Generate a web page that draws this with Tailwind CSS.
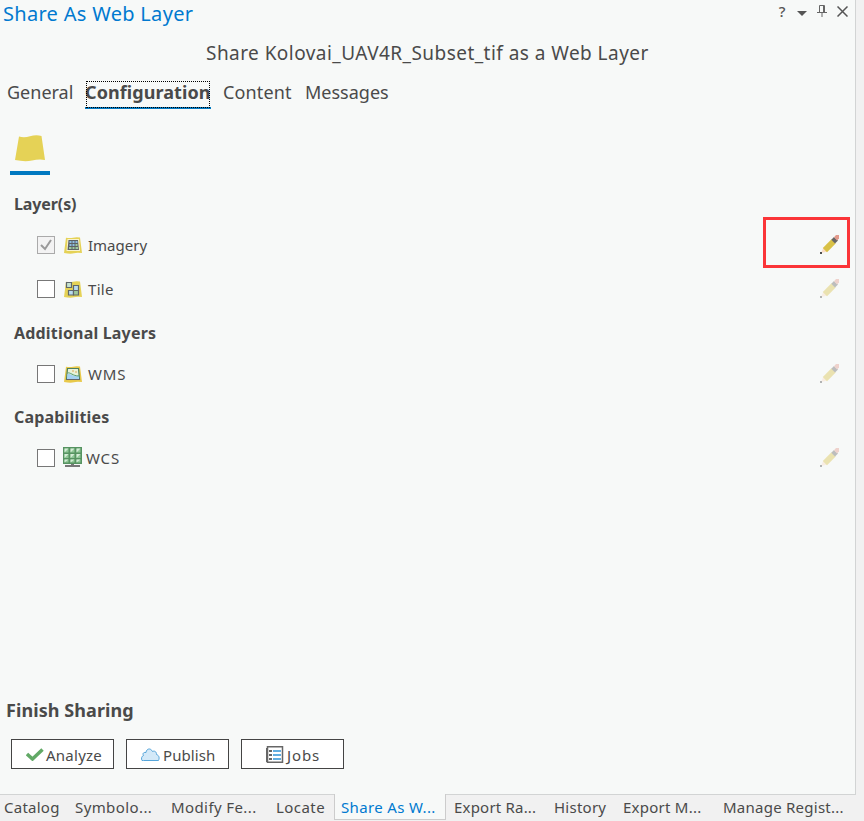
<!DOCTYPE html>
<html lang="en">
<head>
    <meta charset="UTF-8">
    <meta name="viewport" content="width=device-width, initial-scale=1.0">
    <title>Share As Web Layer</title>
    <script src="https://cdn.jsdelivr.net/npm/@tailwindcss/browser@4"></script>
</head>
<body class="bg-[#f1f1f1] w-[864px] h-[821px] overflow-hidden text-[#4a4a4a] font-['Noto_Sans','Open_Sans',sans-serif] text-[15px] whitespace-nowrap">
    <svg class="hidden">
        <symbol id="pencil" viewBox="0 0 19 19">
            <path d="M1 18L3.500 12.500l4 4z" fill="#fbdcc4"/>
            <path d="M0 17h2v2H0z" fill="#4d4d4d"/>
            <path d="M2.800 13L11.500 4.300l4.200 4.200L7 17.200z" fill="#d8c146"/>
            <path d="M11.300 4.700L14 2l4 3.500-3 3z" fill="#666"/>
            <path d="M14 2.200L16 0h3v3.500L17 5.500z" fill="#e29a8c"/>
        </symbol>
        <symbol id="sheet" viewBox="0 0 30 27">
            <path d="M4 1.500Q9 3 15 1.300T26.500 1L30 25q-6-1-13 .5T0 25z" fill="#e5d256"/>
        </symbol>
    </svg>

    <main class="w-[856px] h-[795px] flex flex-col bg-[#f7f9f8] border-r border-b border-[#d2d4d4]">
        <header class="h-7 flex items-center pl-[3px]">
            <h1 class="text-[20px] leading-7 tracking-[.3px] text-[#0079d0]">Share As Web Layer</h1>
            <div class="ml-auto pr-[7px] -mt-[5px] flex items-center text-[#555] h-6">
                <span class="w-[10px] text-[15px] font-medium text-center">?</span>
                <svg class="ml-[10px] mt-1" width="10" height="5" viewBox="0 0 10 5"><path d="M0 0h10L5 5z" fill="#555"/></svg>
                <svg class="ml-[10px] mb-[2px]" width="10" height="13" viewBox="0 0 10 13" fill="none" stroke="#666"><path d="M2.500 8V1.500h5V8M0 8.500h10M5 9v4"/><path d="M6.500 2v6"/></svg>
                <svg class="ml-[10px]" width="11" height="11" viewBox="0 0 11 11" stroke="#555" stroke-width="1.500"><path d="M.5.5l10 10M10.500.5l-10 10"/></svg>
            </div>
        </header>

        <h2 class="h-[50px] pl-[206px] text-[19px] leading-[50px] tracking-[.45px]">Share Kolovai_UAV4R_Subset_tif as a Web Layer</h2>

        <nav class="h-[31px] flex text-[18px] leading-[29px]">
            <span class="w-[85px] pl-[7px]">General</span>
            <span class="relative w-[126px] border-b-2 border-[#0079c1] font-bold tracking-[.08px]">Configuration
                <span class="absolute left-[1px] top-[3px] w-[124px] h-[27px] border border-dotted border-black"></span>
            </span>
            <span class="w-[94px] pl-3 tracking-[.15px]">Content</span>
            <span>Messages</span>
        </nav>

        <div class="h-[81px] pt-[26px] pl-[10px]">
            <div class="w-10 h-10 border-b-4 border-[#0079c1] pl-[5px]">
                <svg width="30" height="27"><use href="#sheet"/></svg>
            </div>
        </div>

        <h3 class="h-[27px] leading-[29px] pl-[14px] text-[16px] font-bold tracking-[-.1px]">Layer(s)</h3>
        <div class="relative h-[51px] pt-[5px] flex items-center pl-[37px] pr-4">
            <span class="w-[18px] h-[18px] border border-[#aaa] bg-[#f3f3f3]">
                <svg width="16" height="16" viewBox="0 0 16 16" fill="none" stroke="#9a9a9a" stroke-width="2"><path d="M3 8l4 4 6-9"/></svg>
            </span>
            <svg class="ml-[9px]" width="18" height="17" viewBox="0 0 18 17">
                <path d="M2 .7Q6 1.500 9 .7T16 .5L18 16q-5-.8-8 .2T0 16z" fill="#e5d256"/>
                <path d="M3.500 2h11.500l1 12H2.500z" fill="#f8f3cf"/>
                <path d="M4.500 3h9.500l1 10H3.500z" fill="#5e6266"/>
                <path d="M5.500 4h2v2h-2zm3 0h2v2h-2zm3 0h2v2h-2zM5.500 7h2v2h-2zm3 0h2v2h-2z" fill="#8ebce2"/>
                <path d="M11.500 7h2v2h-2zm-6.500 3h2.500v2H5zm3.500 0h2v2h-2zm3 0H14v2h-2.500z" fill="#9dc99e"/>
            </svg>
            <span class="ml-[6px]">Imagery</span>
            <svg class="ml-auto mb-px" width="19" height="19"><use href="#pencil"/></svg>
            <span class="absolute left-[763px] top-0 w-[87px] h-[51px] border-3 border-[#fb3538]"></span>
        </div>
        <div class="h-[42px] flex items-center pl-[37px] pr-4">
            <span class="w-[18px] h-[18px] border border-[#777] bg-white"></span>
            <svg class="ml-[9px]" width="18" height="17" viewBox="0 0 18 17">
                <path d="M2 .7Q6 1.500 9 .7T16 .5L18 16q-5-.8-8 .2T0 16z" fill="#e5d256"/>
                <g stroke="#60686a" stroke-width="1.200" fill="#b9dcf0">
                    <path d="M2.500 1.500h5v5h-5z" fill="#c6e3cf"/><path d="M9.500 4.500h5v5h-5z"/>
                    <path d="M4.500 9.500h5v4.500h-5z"/><path d="M9.500 9.500h5v4.500h-5z" fill="#9dc99e"/>
                </g>
            </svg>
            <span class="ml-[6px] tracking-[.3px]">Tile</span>
            <svg class="ml-auto mb-px opacity-40" width="19" height="19"><use href="#pencil"/></svg>
        </div>

        <h3 class="h-[46px] leading-[46px] pl-[14px] text-[16px] font-bold tracking-[.18px]">Additional Layers</h3>
        <div class="h-9 flex items-center pl-[37px] pr-4">
            <span class="w-[18px] h-[18px] border border-[#777] bg-white"></span>
            <svg class="ml-[9px]" width="18" height="17" viewBox="0 0 18 17">
                <path d="M2 .7Q6 1.500 9 .7T16 .5L18 16q-5-.8-8 .2T0 16z" fill="#e8c94a"/>
                <path d="M3.500 2.500h11l1 11h-13z" fill="#e9f3d9" stroke="#4c8061" stroke-width="1.200"/>
                <path d="M3.500 8c3-1 4 3 11.500 2v3H3z" fill="#a5d2f2"/>
                <path d="M3.500 7c3-1 5 3 11.500 3" fill="none" stroke="#579e70"/>
                <path d="M8 5h2m1 1h2" stroke="#dfa75c"/>
                <path d="M2 13.500h14" stroke="#666"/>
            </svg>
            <span class="ml-[6px] tracking-[.9px]">WMS</span>
            <svg class="ml-auto mb-px opacity-40" width="19" height="19"><use href="#pencil"/></svg>
        </div>

        <h3 class="h-[50px] leading-[50px] pl-[14px] text-[16px] font-bold tracking-[.18px]">Capabilities</h3>
        <div class="h-8 flex items-center pl-[37px] pr-4">
            <span class="w-[18px] h-[18px] border border-[#777] bg-white"></span>
            <svg class="ml-2 mb-px" width="19" height="21" viewBox="0 0 19 21">
                <path d="M0 0h19v17H0z" fill="#569361"/>
                <path d="M1.500 1.500h4v4h-4zm6 0h4v4h-4zm6 0h4v4h-4zm-12 5.500h4v4h-4zm6 0h4v4h-4zm6 0h4v4h-4zm-12 5.500h4v3h-4zm6 0h4v3h-4zm6 0h4v3h-4z" fill="#8fc796"/>
                <path d="M1.500 1.500h4l-4 4zm6 0h4l-4 4zm6 0h4l-4 4zM1.500 7h4l-4 4zm6 0h4l-4 4zm6 0h4l-4 4zm-12 5.500h4l-4 3zm6 0h4l-4 3zm6 0h4l-4 3z" fill="#d4ecd6"/>
                <path d="M8 17h3v1h6v2H2v-2h6z" fill="#777"/>
            </svg>
            <span class="ml-1 tracking-[.8px]">WCS</span>
            <svg class="ml-auto mb-px opacity-40" width="19" height="19"><use href="#pencil"/></svg>
        </div>

        <section class="mt-auto h-[100px]">
            <h3 class="h-8 leading-8 pl-[6px] text-[18px] font-bold tracking-[.08px]">Finish Sharing</h3>
            <div class="mt-[13px] pl-[11px] flex gap-3">
                <button class="w-[103px] h-[30px] flex items-center pl-[14px] pt-[2px] bg-white border border-[#444] tracking-[.25px]">
                    <svg class="mb-[2px]" width="18" height="13" viewBox="0 0 18 13" fill="none" stroke="#62a966" stroke-width="3.500"><path d="M1 6l5.500 5L16.500 1.500"/></svg>
                    <span class="ml-[2px]">Analyze</span>
                </button>
                <button class="w-[103px] h-[30px] flex items-center pl-[14px] pt-[2px] bg-white border border-[#444]">
                    <svg class="mb-px" width="19" height="13" viewBox="0 0 19 13" fill="#d3e9f8" stroke="#55a5da"><path d="M2.500 12.500h15c1-2 1-5-2-6 0-3-2-4-4-3-2-4-6-3-6.500 1C2 4 1.500 6 2.500 7.500.5 8 0 11 1 12.500z"/></svg>
                    <span class="ml-[3px] tracking-[.1px]">Publish</span>
                </button>
                <button class="w-[103px] h-[30px] flex items-center pl-[24px] pt-[2px] bg-white border border-[#444]">
                    <svg class="mb-[2px]" width="18" height="17" viewBox="0 0 18 17"><path d="M1.500.75h15v15.500h-15z" fill="#fff" stroke="#666" stroke-width="1.500"/><path d="M0 2h1v14H0z" fill="#666"/><path d="M3 4h3v2H3zm0 4h3v2H3zm0 4h3v2H3z" fill="#666"/><path d="M7 4h8v2H7zm0 4h8v2H7zm0 4h8v2H7z" fill="#63aee0"/></svg>
                    <span class="ml-[3px] tracking-[.9px]">Jobs</span>
                </button>
            </div>
        </section>
    </main>

    <footer class="h-[26px] flex leading-[25px] tracking-[.25px]">
        <span class="w-[75px] pl-1">Catalog</span>
        <span class="w-24 tracking-[.4px]">Symbolo...</span>
        <span class="w-[105px] tracking-[.4px]">Modify Fe...</span>
        <span class="w-[58px] tracking-[.45px]">Locate</span>
        <span class="-mt-px h-[26px] leading-[27px] w-[112px] pl-[6px] bg-[#f7f9f8] border-x border-b border-[#ccc] text-[#0079d0] tracking-[.35px]">Share As W...</span>
        <span class="w-[108px] pl-2 tracking-[.2px]">Export Ra...</span>
        <span class="w-[69px]">History</span>
        <span class="w-[100px]">Export M...</span>
        <span>Manage Regist...</span>
    </footer>
</body>
</html>
